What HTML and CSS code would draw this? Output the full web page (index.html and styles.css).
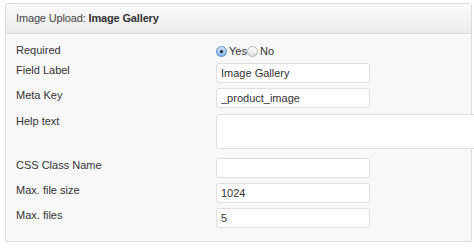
FILE: index.html
```html
<!DOCTYPE html>
<html>
<head>
<meta charset="utf-8">
<title>Image Upload: Image Gallery</title>
<link rel="stylesheet" href="styles.css">
</head>
<body>
<div class="postbox">
  <h3 class="postbox-title">Image Upload: <strong>Image Gallery</strong></h3>
  <div class="form">
    <div class="row row-radio">
      <div class="label">Required</div>
      <div class="field radios">
        <label class="choice"><span class="radio checked"></span>Yes</label>
        <label class="choice"><span class="radio"></span>No</label>
      </div>
    </div>
    <div class="row">
      <div class="label">Field Label</div>
      <div class="field"><input class="text" type="text" value="Image Gallery"></div>
    </div>
    <div class="row row-meta">
      <div class="label">Meta Key</div>
      <div class="field"><input class="text" type="text" value="_product_image"></div>
    </div>
    <div class="row row-help">
      <div class="label">Help text</div>
      <div class="field"><textarea class="area"></textarea></div>
    </div>
    <div class="row">
      <div class="label">CSS Class Name</div>
      <div class="field"><input class="text" type="text" value=""></div>
    </div>
    <div class="row">
      <div class="label">Max. file size</div>
      <div class="field"><input class="text" type="text" value="1024"></div>
    </div>
    <div class="row row-last">
      <div class="label">Max. files</div>
      <div class="field"><input class="text" type="text" value="5"></div>
    </div>
  </div>
</div>
</body>
</html>
```

FILE: styles.css
```css
html, body {
  margin: 0;
  padding: 0;
  background: #ffffff;
  overflow: hidden;
}

body {
  font-family: "Liberation Sans", Arial, Helvetica, sans-serif;
  font-size: 11px;
  color: #333333;
}

.postbox {
  box-sizing: border-box;
  margin: 3px 0 0 5px;
  width: 467px;
  height: 239px;
  border: 1px solid #dcdcdc;
  border-radius: 3px;
  background: #f8f8f8;
  box-shadow: 0 1px 1px rgba(0, 0, 0, 0.04), inset 0 1px 0 #ffffff;
}

.postbox-title {
  margin: 0;
  height: 29px;
  line-height: 29px;
  padding: 0 0 0 10px;
  font-size: 11px;
  font-weight: normal;
  letter-spacing: -0.15px;
  color: #464646;
  background: linear-gradient(to bottom, #fafafa, #ebebeb);
  border-bottom: 1px solid #d9d9d9;
  border-radius: 3px 3px 0 0;
  box-shadow: 0 1px 0 #fdfdfd;
}

.postbox-title strong {
  font-weight: bold;
  color: #333333;
}

.form {
  padding: 9px 0 0 10px;
}

.row {
  display: flex;
  align-items: flex-start;
  margin-bottom: 5px;
}

.row-meta {
  margin-bottom: 6px;
}

.row-help {
  margin-bottom: 9px;
}

.row-last {
  margin-bottom: 0;
}

.label {
  width: 200px;
  flex: none;
  line-height: 14px;
  color: #333333;
}

.row-help .label {
  padding-top: 0;
}

.field {
  flex: none;
}

.radios {
  display: flex;
  align-items: center;
  height: 13px;
  padding-top: 2px;
  line-height: 13px;
}

.choice {
  display: flex;
  align-items: center;
  color: #333333;
}

.radio {
  box-sizing: border-box;
  display: inline-block;
  width: 11px;
  height: 11px;
  border-radius: 50%;
  border: 1px solid #b3b3b3;
  background: linear-gradient(to bottom, #ffffff, #dcdcdc);
  margin-right: 2px;
  position: relative;
}

.radio.checked {
  border-color: #5a8fc9;
  background: linear-gradient(to bottom, #cfe4f9, #7fb4ec);
}

.radio.checked::after {
  content: "";
  position: absolute;
  left: 3px;
  top: 3px;
  width: 3px;
  height: 3px;
  border-radius: 50%;
  background: #1b2430;
}

.text {
  box-sizing: border-box;
  width: 154px;
  height: 20px;
  margin: 0;
  padding: 0 4px;
  border: 1px solid #dfdfdf;
  border-radius: 3px;
  background: #ffffff;
  font-family: "Liberation Sans", Arial, Helvetica, sans-serif;
  font-size: 11px;
  color: #333333;
  outline: none;
}

.area {
  display: block;
  box-sizing: border-box;
  width: 280px;
  height: 35px;
  margin: 0;
  padding: 3px 4px;
  border: 1px solid #dfdfdf;
  border-radius: 3px;
  background: #ffffff;
  font-family: "Liberation Sans", Arial, Helvetica, sans-serif;
  font-size: 11px;
  resize: none;
  outline: none;
}
```
